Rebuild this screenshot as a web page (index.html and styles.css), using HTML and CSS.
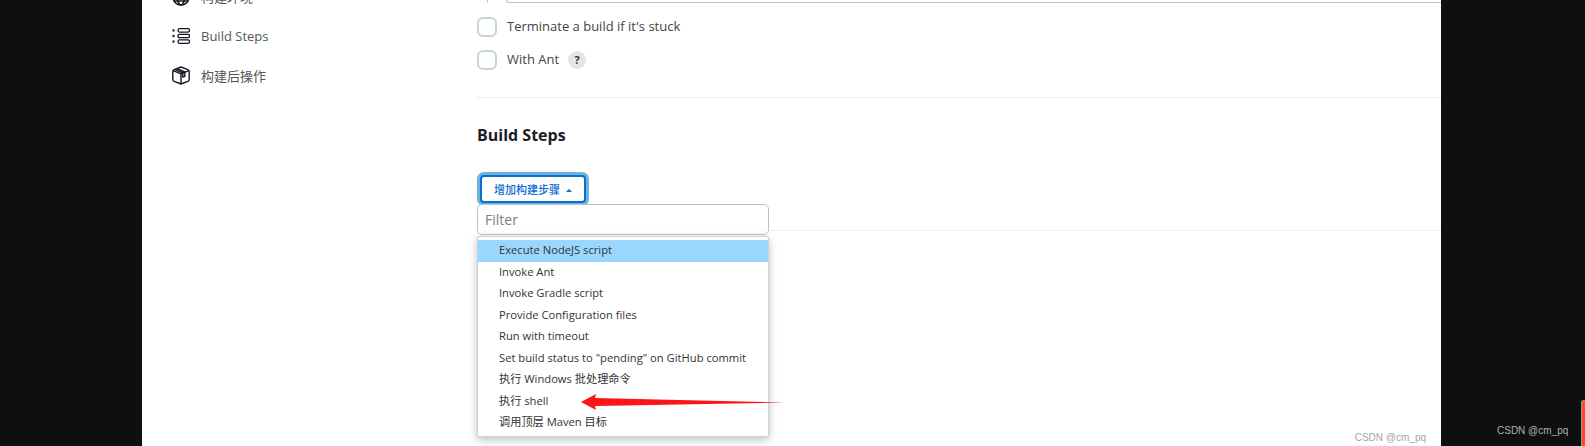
FILE: index.html
```html
<!DOCTYPE html>
<html lang="en">
<head>
  <meta charset="UTF-8">
  <meta name="viewport" content="width=device-width, initial-scale=1.0">
  <title>Build Steps</title>
  <link rel="stylesheet" href="styles.css">
</head>
<body>
  <div class="page-panel">
    <nav class="side-nav">
      <div class="nav-item">
        <svg class="nav-icon" viewBox="0 0 18 18" fill="none" stroke="#14141f" stroke-width="1.5">
          <circle cx="9" cy="9" r="8"/>
          <ellipse cx="9" cy="9" rx="3.500" ry="8"/>
          <path d="M1 9h16M2 5h14M2 13h14"/>
        </svg>
        <span>构建环境</span>
      </div>
      <div class="nav-item">
        <svg class="nav-icon" viewBox="0 0 18 18" fill="none" stroke="#14141f" stroke-width="1.3">
          <rect x="6" y="1.700" width="11.500" height="3.400" rx="1.500"/>
          <rect x="6" y="7.300" width="11.500" height="3.400" rx="1.500"/>
          <rect x="6" y="12.900" width="11.500" height="3.400" rx="1.500"/>
          <path d="M1 2.400v2l1.700-1zM1 8v2l1.700-1zM1 13.600v2l1.700-1z" stroke-width="1"/>
        </svg>
        <span>Build Steps</span>
      </div>
      <div class="nav-item">
        <svg class="nav-icon nav-icon-box" viewBox="0 0 18 19" fill="none" stroke="#14141f" stroke-width="1.400" stroke-linejoin="round">
          <path d="M9 1l6.800 2.600q1.400.6 1.400 2v7.800q0 1.400-1.400 2L9 18l-6.800-2.600q-1.400-.6-1.400-2V5.600q0-1.400 1.400-2z"/>
          <path d="M1.200 4.600L9 7.800l7.800-3.200M9 7.800V18"/>
          <path d="M5 2.700l7.800 3.300v4.300l-2 .8V6.900L3.200 3.600"/>
        </svg>
        <span>构建后操作</span>
      </div>
    </nav>

    <main class="config-main">
      <div class="top-row">
        <span class="top-tick"></span>
        <span class="top-input"></span>
      </div>
      <label class="check-row">
        <span class="check-box"></span>
        <span class="check-label">Terminate a build if it's stuck</span>
      </label>
      <label class="check-row">
        <span class="check-box"></span>
        <span class="check-label">With Ant</span>
        <span class="help-badge">?</span>
      </label>
      <div class="section-rule"></div>
      <h2 class="section-title">Build Steps</h2>
      <div class="add-step">
        <button class="add-button">增加构建步骤<span class="caret"></span></button>
        <div class="step-menu">
          <input class="menu-filter" type="text" placeholder="Filter">
          <ul class="menu-list">
            <li class="active">Execute NodeJS script</li>
            <li>Invoke Ant</li>
            <li>Invoke Gradle script</li>
            <li>Provide Configuration files</li>
            <li>Run with timeout</li>
            <li>Set build status to "pending" on GitHub commit</li>
            <li>执行 Windows 批处理命令</li>
            <li>执行 shell</li>
            <li>调用顶层 Maven 目标</li>
          </ul>
        </div>
      </div>
      <div class="faint-rule"></div>
    </main>

    <svg class="red-arrow" viewBox="0 0 205 18">
      <path d="M0 9L15 1 14 5 204 9.500 14 13 15 17z" fill="#fb1418"/>
    </svg>
    <span class="watermark">CSDN @cm_pq</span>
  </div>
  <span class="watermark-dark">CSDN @cm_pq</span>
  <span class="side-tab"></span>
</body>
</html>
```

FILE: styles.css
```css
body {
  margin: 0;
  height: 446px;
  overflow: hidden;
  background-color: #0f0f0f;
  font-family: "Open Sans", "Noto Sans CJK SC", sans-serif;
  font-size: 13px;
  color: #333;
  display: flex;
  padding-left: 142px;
  box-sizing: border-box;
  position: relative;
}
.page-panel {
  position: relative;
  width: 1299px;
  height: 446px;
  background-color: white;
  display: flex;
  overflow: hidden;
}
.side-nav {
  width: 335px;
  padding-left: 30px;
  margin-top: -23px;
  box-sizing: border-box;
  flex-shrink: 0;
}
.nav-item {
  display: flex;
  align-items: center;
  gap: 11px;
  height: 39.500px;
  color: #555;
  font-size: 13px;
}
.nav-icon {
  width: 18px;
  height: 18px;
  flex-shrink: 0;
}
.nav-icon-box {
  height: 19px;
}
.config-main {
  flex: 1;
  min-width: 0;
}
.top-row {
  display: flex;
  height: 3px;
}
.top-tick {
  width: 1px;
  height: 3px;
  margin-left: 10px;
  background-color: #b9c6cc;
}
.top-input {
  flex: 1;
  margin-left: 18px;
  height: 2px;
  border-bottom: 1px solid #b4c6cc;
  border-left: 1px solid #b4c6cc;
  border-bottom-left-radius: 4px;
}
.check-row {
  display: flex;
  align-items: center;
  gap: 9px;
  height: 20px;
  margin-top: 14px;
  font-size: 13px;
  color: #444;
}
.check-row + .check-row {
  margin-top: 13px;
}
.check-label {
  margin: -2px 0 0 1px;
}
.check-box {
  width: 16px;
  height: 16px;
  border: 2px solid #c5d4da;
  border-radius: 6px;
  background-color: white;
}
.help-badge {
  width: 18px;
  height: 18px;
  border-radius: 50%;
  background-color: #e6e6e6;
  color: #333;
  font-size: 11px;
  font-weight: 700;
  text-align: center;
  line-height: 18px;
}
.section-rule {
  height: 1px;
  margin-top: 27px;
  background-color: #eeeeee;
}
.section-title {
  margin: 26px 0 0;
  font-size: 16px;
  line-height: 22px;
  font-weight: 700;
  color: #1c1c24;
}
.add-step {
  position: relative;
  margin-top: 26px;
  height: 32px;
  padding: 3px 0 0 3px;
  box-sizing: border-box;
}
.add-button {
  display: block;
  width: 106px;
  height: 28px;
  box-sizing: border-box;
  border: 2px solid #0b6ed1;
  box-shadow: 0 0 0 3px #6db5d8;
  border-radius: 4px;
  background-color: white;
  color: #0b6ed1;
  font-family: inherit;
  font-size: 11px;
  font-weight: 500;
  padding: 0;
}
.caret {
  display: inline-block;
  width: 0;
  height: 0;
  margin-left: 6px;
  vertical-align: 2px;
  border-left: 3px solid transparent;
  border-right: 3px solid transparent;
  border-bottom: 3px solid #0b6ed1;
}
.step-menu {
  position: absolute;
  top: 32px;
  left: 0;
  width: 292px;
  z-index: 2;
}
.menu-filter {
  display: block;
  width: 100%;
  height: 31px;
  box-sizing: border-box;
  padding: 0 7px;
  border: 1px solid #b4c6cc;
  border-radius: 5px;
  background-color: white;
  font-family: inherit;
  font-size: 14px;
  color: #333;
}
.menu-filter::placeholder {
  color: #808080;
}
.menu-list {
  list-style: none;
  margin: 1px 0 0;
  padding: 3px 0 2px;
  background-color: white;
  border: 1px solid #c6d3d8;
  box-shadow: 0 3px 8px rgba(60, 80, 90, 0.35);
  border-radius: 2px;
}
.menu-list li {
  height: 21.500px;
  line-height: 20px;
  padding-left: 21px;
  font-size: 11.200px;
  color: #333;
  white-space: nowrap;
}
.menu-list li.active {
  background-color: #9ad7ff;
}
.faint-rule {
  height: 1px;
  margin-top: 26px;
  background-color: #f2f2f2;
}
.red-arrow {
  position: absolute;
  left: 439px;
  top: 393px;
  width: 205px;
  height: 18px;
  z-index: 3;
}
.watermark {
  position: absolute;
  right: 15px;
  top: 432px;
  font-family: "Liberation Sans", sans-serif;
  font-size: 10px;
  color: #a6a6a6;
}
.watermark-dark {
  position: absolute;
  left: 1497px;
  top: 425px;
  font-family: "Liberation Sans", sans-serif;
  font-size: 10px;
  color: #b0b0b0;
}
.side-tab {
  position: absolute;
  left: 1581px;
  top: 400px;
  width: 4px;
  height: 46px;
  box-sizing: border-box;
  background-color: #fb4a2a;
  border-top: 1px solid #999;
  border-left: 1px solid #999;
  border-top-left-radius: 3px;
}
```
